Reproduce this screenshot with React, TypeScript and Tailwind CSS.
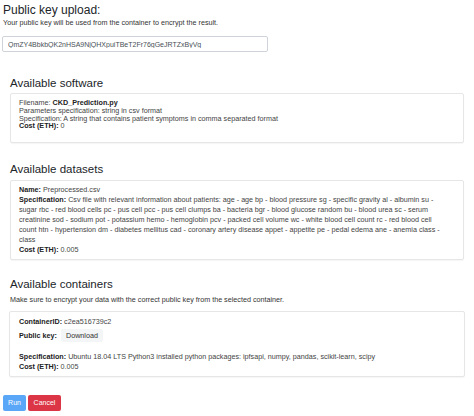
export default function App() {
  const specLines = [
    'sugar rbc - red blood cells pc - pus cell pcc - pus cell clumps ba - bacteria bgr - blood glucose random bu - blood urea sc - serum',
    'creatinine sod - sodium pot - potassium hemo - hemoglobin pcv - packed cell volume wc - white blood cell count rc - red blood cell',
    'count htn - hypertension dm - diabetes mellitus cad - coronary artery disease appet - appetite pe - pedal edema ane - anemia class -',
    'class',
  ];

  return (
    <div className="w-[474px] h-[416px] overflow-hidden bg-white text-[#212529] font-['Liberation_Sans',Arial,sans-serif]">
      <div className="pl-[3px] pt-[3px]">
        <h3 className="text-[12px] leading-[15px] font-medium">Public key upload:</h3>
        <p className="text-[7.2px] leading-[9px] text-[#333]">
          Your public key will be used from the container to encrypt the result.
        </p>
        <input
          readOnly
          value="QmZY4BbkbQK2nHSA9NjQHXpuiTBeT2Fr76gGeJRTZxByVg"
          className="mt-[9px] -ml-px block h-[16px] w-[266px] rounded-[2px] border border-[#ced4da] bg-white pl-[5px] text-[7px] text-[#495057] outline-none"
        />
      </div>

      <div className="px-[10px]">
        <h4 className="mt-[24px] text-[11.5px] leading-[14px] font-medium">Available software</h4>
        <div className="mt-[3px] h-[50px] rounded-[2px] border border-[#e6e6e6] px-[8px] pt-[5px] text-[7.2px] leading-[7.8px] text-[#444] shadow-[0_1px_1px_rgba(0,0,0,0.04)]">
          <div>
            Filename: <b className="text-[#222]">CKD_Prediction.py</b>
          </div>
          <div>Parameters specification: string in csv format</div>
          <div>Specification: A string that contains patient symptoms in comma separated format</div>
          <div>
            <b className="text-[#222]">Cost (ETH):</b> 0
          </div>
        </div>

        <h4 className="mt-[19px] text-[11.5px] leading-[14px] font-medium">Available datasets</h4>
        <div className="mt-[4px] h-[80px] rounded-[2px] border border-[#e6e6e6] px-[8px] pt-[4px] text-[7.2px] leading-[10px] text-[#444] shadow-[0_1px_1px_rgba(0,0,0,0.04)]">
          <div>
            <b className="text-[#222]">Name:</b> Preprocessed.csv
          </div>
          <div className="whitespace-nowrap">
            <b className="text-[#222]">Specification:</b> Csv file with relevant information about patients: age - age bp -
            blood pressure sg - specific gravity al - albumin su -
          </div>
          {specLines.map((line) => (
            <div key={line} className="whitespace-nowrap">
              {line}
            </div>
          ))}
          <div>
            <b className="text-[#222]">Cost (ETH):</b> 0.005
          </div>
        </div>

        <h4 className="mt-[17px] text-[11.5px] leading-[14px] font-medium">Available containers</h4>
        <p className="mt-[4px] text-[7.2px] leading-[9px] text-[#333]">
          Make sure to encrypt your data with the correct public key from the selected container.
        </p>
        <div className="mt-[7px] -mx-px h-[66px] rounded-[2px] border border-[#e6e6e6] px-[9px] pt-[5px] text-[7.2px] leading-[10px] text-[#444] shadow-[0_1px_1px_rgba(0,0,0,0.04)]">
          <div>
            <b className="text-[#222]">ContainerID:</b> c2ea516739c2
          </div>
          <div className="mt-[2px] flex items-center gap-[4px]">
            <b className="text-[#222]">Public key:</b>
            <span className="flex h-[13px] items-center rounded-[2px] bg-[#f4f5f6] px-[5px] text-[#333]">Download</span>
          </div>
          <div className="mt-[10px]">
            <b className="text-[#222]">Specification:</b> Ubuntu 18.04 LTS Python3 installed python packages: ipfsapi, numpy,
            pandas, scikit-learn, scipy
          </div>
          <div>
            <b className="text-[#222]">Cost (ETH):</b> 0.005
          </div>
        </div>
      </div>

      <div className="mt-[18px] flex gap-[2px] pl-[3px]">
        <button className="h-[16px] w-[23px] rounded-[2px] bg-[#5aa6f7] text-[7px] text-white">Run</button>
        <button className="h-[16px] w-[33px] rounded-[2px] bg-[#dc3545] text-[7px] text-white">Cancel</button>
      </div>
    </div>
  );
}
